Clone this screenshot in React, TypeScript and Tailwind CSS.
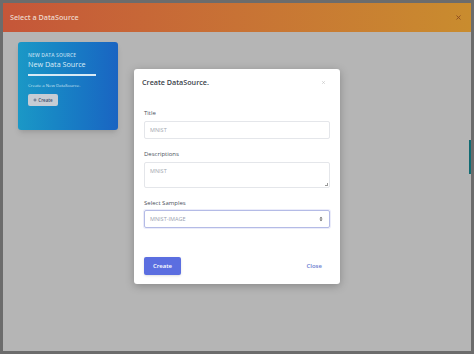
import { X, Plus } from 'lucide-react';

export default function App() {
  return (
    <div
      className="w-[474px] h-[354px] bg-[#6c6c6c] p-[3px] overflow-hidden"
      style={{ fontFamily: '"Open Sans", "Noto Sans", sans-serif' }}
    >
      <div className="relative w-full h-full flex flex-col bg-[#b5b5b5] overflow-hidden">
        {/* Outer modal header */}
        <div className="h-[29px] shrink-0 flex items-center justify-between px-[7px] bg-gradient-to-r from-[#c55639] to-[#c98c2e]">
          <span className="text-[7.2px] font-semibold text-[#eed6c8]">Select a DataSource</span>
          <X size={7} strokeWidth={3} className="text-[#8a4a20] mr-[2px]" />
        </div>

        {/* Outer modal body */}
        <div className="flex-1 px-[15px] pt-[10px]">
          <div className="w-[100px] h-[88px] rounded-[3px] bg-gradient-to-r from-[#1b98c6] to-[#1a64c2] px-[10px] pt-[10px] shadow-md">
            <div className="text-[5px] font-semibold tracking-[0.1px] text-[#b9dcef] leading-[6px]">NEW DATA SOURCE</div>
            <div className="text-[7.2px] text-[#dcecf7] leading-[11px] mt-[1px]">New Data Source</div>
            <div className="w-[68px] h-[1.5px] bg-[#d8eaf5] mt-[4px]" />
            <div className="text-[4.3px] text-[#cde4f2] mt-[6px]">Create a New DataSource.</div>
            <div className="mt-[6px] w-[30px] h-[12px] rounded-[2px] bg-[#c6ccd4] flex items-center justify-center gap-[1px] text-[#3d5070]">
              <Plus size={4} strokeWidth={4} />
              <span className="text-[4.5px] font-semibold">Create</span>
            </div>
          </div>
        </div>

        {/* Sliver of page behind on the right edge */}
        <div className="absolute right-0 top-[137px] w-[2px] h-[34px] bg-[#0f6a72]" />

        {/* Inner modal */}
        <div className="absolute left-[131px] top-[66px] w-[206px] h-[215px] bg-white rounded-[3px] shadow-[0_2px_8px_rgba(0,0,0,0.25)] flex flex-col">
          <div className="flex items-center justify-between px-[8px] pt-[8px]">
            <span className="text-[7.2px] font-semibold text-[#3b3f4a]">Create DataSource.</span>
            <X size={5} strokeWidth={2} className="text-[#b0b0b0] mr-[6px]" />
          </div>

          <div className="flex flex-col px-[10px] pt-[21px]">
            <label className="text-[6px] text-[#4a4f5a] leading-[8px]">Title</label>
            <div className="mt-[4px] h-[18px] border border-[#e4e6ea] rounded-[2px] flex items-center px-[5px] text-[5.5px] text-[#a5a8b0]">
              MNIST
            </div>

            <label className="mt-[11px] text-[6px] text-[#4a4f5a] leading-[8px]">Descriptions</label>
            <div className="relative mt-[4px] h-[26px] border border-[#e4e6ea] rounded-[2px] px-[5px] pt-[4px] text-[5.5px] text-[#a5a8b0]">
              MNIST
              <span className="absolute right-[1px] bottom-[1px] w-[3px] h-[3px] border-r border-b border-[#999]" />
            </div>

            <label className="mt-[11px] text-[6px] text-[#4a4f5a] leading-[8px]">Select Samples</label>
            <div className="mt-[3px] h-[18px] border border-[#b4bbe6] rounded-[2px] flex items-center justify-between px-[5px] text-[5.5px] text-[#9a9fb0] shadow-[0_0_0_1px_rgba(120,130,220,0.15)]">
              <span>MNIST-IMAGE</span>
              <svg width="4" height="6" viewBox="0 0 4 6" className="mr-[1px]">
                <path d="M0.5 2.4 L2 0.8 L3.5 2.4 Z" fill="#555" />
                <path d="M0.5 3.6 L2 5.2 L3.5 3.6 Z" fill="#555" />
              </svg>
            </div>
          </div>

          <div className="mt-auto flex items-center justify-between px-[10px] pb-[9px]">
            <div className="w-[37px] h-[18px] rounded-[2px] bg-[#5b6ee0] flex items-center justify-center text-[6px] font-semibold text-white shadow-sm">
              Create
            </div>
            <span className="text-[6px] font-semibold text-[#6a7ccf] mr-[8px]">Close</span>
          </div>
        </div>
      </div>
    </div>
  );
}
